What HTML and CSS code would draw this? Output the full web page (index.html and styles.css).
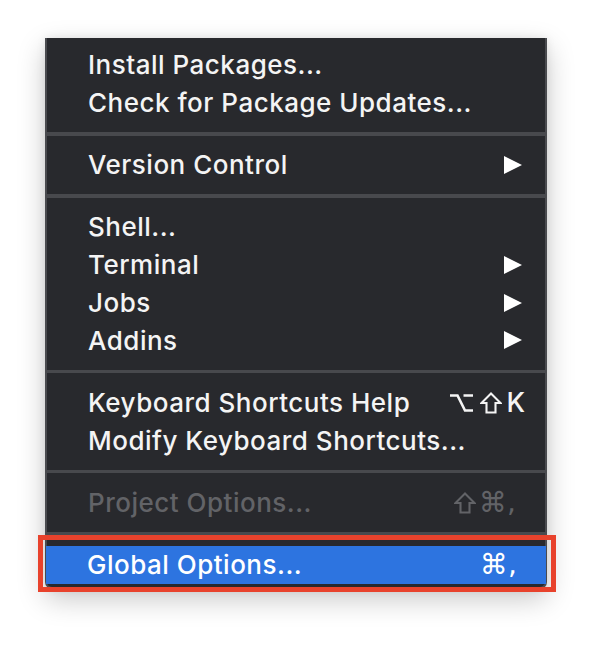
FILE: index.html
```html
<!DOCTYPE html>
<html>
<head>
<meta charset="utf-8">
<link rel="stylesheet" href="styles.css">
</head>
<body>
<div class="stage">
  <div class="menu">
    <div class="item"><span class="label">Install Packages...</span></div>
    <div class="item"><span class="label">Check for Package Updates...</span></div>
    <div class="sep"></div>
    <div class="item"><span class="label">Version Control</span><svg class="arrow" viewBox="0 0 18 18"><polygon points="0,0 18,9 0,18"/></svg></div>
    <div class="sep"></div>
    <div class="item"><span class="label">Shell...</span></div>
    <div class="item"><span class="label">Terminal</span><svg class="arrow" viewBox="0 0 18 18"><polygon points="0,0 18,9 0,18"/></svg></div>
    <div class="item"><span class="label">Jobs</span><svg class="arrow" viewBox="0 0 18 18"><polygon points="0,0 18,9 0,18"/></svg></div>
    <div class="item"><span class="label">Addins</span><svg class="arrow" viewBox="0 0 18 18"><polygon points="0,0 18,9 0,18"/></svg></div>
    <div class="sep"></div>
    <div class="item">
      <span class="label">Keyboard Shortcuts Help</span>
      <span class="key">
        <svg class="opt" viewBox="0 0 23 20"><path d="M0,2.5 H7.5 L15,17.5 H23 M13.5,2.5 H23"/></svg>
        <svg class="shift" viewBox="0 0 22 22"><path d="M11,1.5 L20.5,11 H15.5 V20.5 H6.5 V11 H1.5 Z"/></svg>
        <span class="k">K</span>
      </span>
    </div>
    <div class="item"><span class="label">Modify Keyboard Shortcuts...</span></div>
    <div class="sep"></div>
    <div class="item disabled">
      <span class="label">Project Options...</span>
      <span class="key">
        <svg class="shift" viewBox="0 0 22 22"><path d="M11,1.5 L20.5,11 H15.5 V20.5 H6.5 V11 H1.5 Z"/></svg>
        <span class="cmd">⌘,</span>
      </span>
    </div>
    <div class="sep"></div>
    <div class="item selected">
      <span class="label">Global Options...</span>
      <span class="key"><span class="cmd">⌘,</span></span>
    </div>
  </div>
  <div class="highlight"></div>
</div>
</body>
</html>
```

FILE: styles.css
```css
html, body {
  margin: 0;
  padding: 0;
  background: #ffffff;
}

.stage {
  position: relative;
  width: 592px;
  height: 646px;
  padding-top: 38px;
  box-sizing: border-box;
}

.menu {
  margin-left: 45px;
  width: 502px;
  box-sizing: border-box;
  background: #28292d;
  border: 2px solid #4a4b4f;
  border-top: none;
  border-radius: 0 0 7px 7px;
  padding: 8px 0 3.5px;
  box-shadow: 0 10px 28px rgba(0, 0, 0, 0.22), 0 0 10px rgba(0, 0, 0, 0.08);
  font-family: Inter, "Noto Sans", "DejaVu Sans", sans-serif;
  font-size: 26px;
  font-weight: 500;
  color: #f4f4f4;
}

.item {
  display: flex;
  align-items: center;
  justify-content: space-between;
  height: 37.75px;
  line-height: 37.75px;
  padding: 0 20px 0 41px;
  white-space: nowrap;
}

.label {
  letter-spacing: 0.5px;
}

.key {
  display: flex;
  align-items: center;
  gap: 3px;
}

.opt {
  width: 23px;
  height: 20px;
  fill: none;
  stroke: currentColor;
  stroke-width: 2.6;
  margin-right: 4px;
}

.shift {
  width: 22px;
  height: 22px;
  fill: none;
  stroke: currentColor;
  stroke-width: 2.1;
  stroke-linejoin: miter;
}

.k {
  font-size: 27px;
  margin-left: 1px;
}

.cmd {
  font-family: "DejaVu Sans", sans-serif;
  font-size: 28px;
  font-weight: 400;
  letter-spacing: 0;
  margin-right: 9px;
}

.arrow {
  width: 18px;
  height: 18px;
  margin-right: 3px;
  fill: #ffffff;
}

.sep {
  height: 3.5px;
  background: #48494d;
  margin: 10.5px 0;
}

.disabled {
  color: #626367;
}

.selected {
  background: #2d74e0;
  color: #ffffff;
  margin: 0 -1px;
}

.highlight {
  position: absolute;
  left: 38px;
  top: 535px;
  width: 518px;
  height: 57px;
  box-sizing: border-box;
  border: 5px solid #e8422c;
}
```
